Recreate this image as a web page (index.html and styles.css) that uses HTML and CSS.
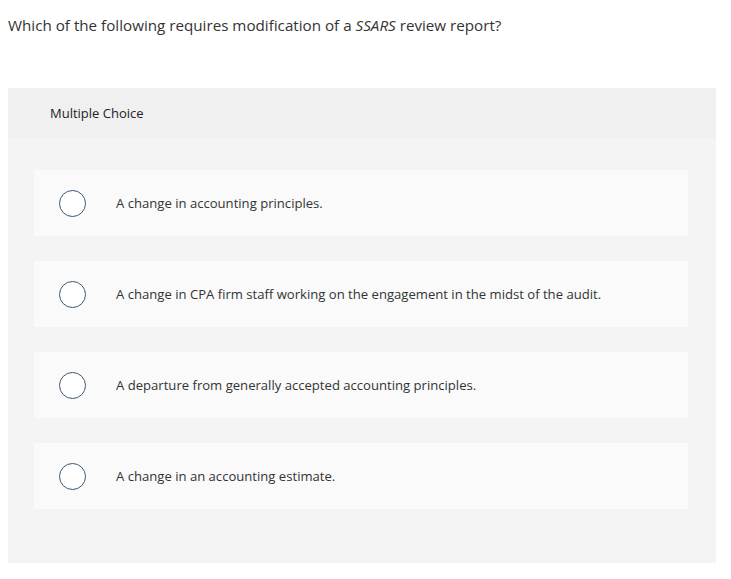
FILE: index.html
```html
<!DOCTYPE html>
<html>
<head>
<meta charset="utf-8">
<link rel="stylesheet" href="styles.css">
</head>
<body>
<p class="question">Which of the following requires modification of a <em>SSARS</em> review report?</p>
<div class="panel">
  <div class="panel-head">Multiple Choice</div>
  <div class="panel-body">
    <div class="option"><span class="radio"></span><span class="label">A change in accounting principles.</span></div>
    <div class="option"><span class="radio"></span><span class="label">A change in CPA firm staff working on the engagement in the midst of the audit.</span></div>
    <div class="option"><span class="radio"></span><span class="label">A departure from generally accepted accounting principles.</span></div>
    <div class="option"><span class="radio"></span><span class="label">A change in an accounting estimate.</span></div>
  </div>
</div>
</body>
</html>
```
FILE: styles.css
```css
html, body { margin: 0; padding: 0; background: #fff; }
body { font-family: "Open Sans", "Liberation Sans", sans-serif; color: #333; }
.question { margin: 0; padding: 15px 8px 0; font-size: 15.2px; line-height: 20px; color: #333; height: 88px; box-sizing: border-box; }
.question em { font-style: italic; }
.panel { margin: 0 15px 0 8px; background: #f4f4f4; }
.panel-head { height: 50px; background: #f0f0f0; padding-left: 42px; display: flex; align-items: center; font-size: 13px; color: #222; }
.panel-body { padding: 32px 28px 54px 26px; display: flex; flex-direction: column; gap: 25px; }
.option { height: 66px; background: #fafafa; display: flex; align-items: center; }
.radio { width: 25px; height: 25px; border: 1.5px solid #3d5770; border-radius: 50%; background: #fff; margin-left: 25px; flex: none; }
.label { margin-left: 30px; font-size: 13.1px; color: #333; }
```
